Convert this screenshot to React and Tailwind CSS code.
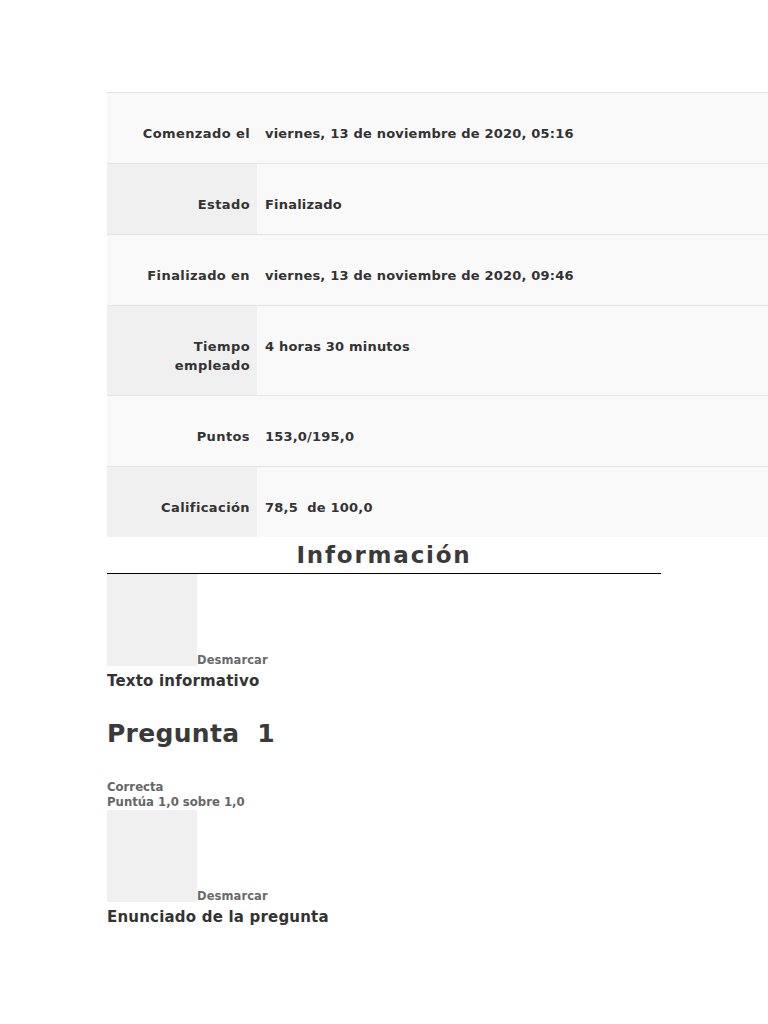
import React from 'react';

// Summary rows of the attempt
const rows = [
  { label: 'Comenzado el', value: 'viernes, 13 de noviembre de 2020, 05:16' },
  { label: 'Estado', value: 'Finalizado' },
  { label: 'Finalizado en', value: 'viernes, 13 de noviembre de 2020, 09:46' },
  { label: ['Tiempo', 'empleado'], value: '4 horas 30 minutos' },
  { label: 'Puntos', value: '153,0/195,0' },
  { label: 'Calificación', value: '78,5\u00a0 de 100,0' },
];

function SummaryTable() {
  return (
    <div className="w-[661px] border-t border-[#e3e3e3]">
      {rows.map((row, i) => (
        <div
          key={i}
          className={
            'grid grid-cols-[150px_1fr] ' + (i > 0 ? 'border-t border-[#e3e3e3]' : '')
          }
        >
          <div
            className={
              'pr-[7px] pt-[31px] pb-[20px] text-right text-[13px] leading-[19px] font-bold tracking-[0.4px] text-[#333] ' +
              (i % 2 === 1 ? 'bg-[#f0f0f0]' : 'bg-[#f9f9f9]')
            }
          >
            {Array.isArray(row.label)
              ? row.label.map((l, j) => <div key={j}>{l}</div>)
              : row.label}
          </div>
          <div className="bg-[#f9f9f9] pl-[8px] pt-[31px] pb-[20px] text-[13px] leading-[19px] font-bold tracking-[0.2px] text-[#333] whitespace-pre">
            {row.value}
          </div>
        </div>
      ))}
    </div>
  );
}

function FlagBox() {
  return (
    <div className="flex items-end">
      <div className="h-[92px] w-[90px] bg-[#f0f0f0]" />
      <span className="text-[11.5px] leading-[12px] font-bold tracking-[0.1px] text-[#6a6a6a]">
        Desmarcar
      </span>
    </div>
  );
}

export default function App() {
  return (
    <div
      className="min-h-screen bg-white pl-[107px] pt-[92px] text-[#333]"
      style={{ fontFamily: '"DejaVu Sans", "Liberation Sans", sans-serif' }}
    >
      <SummaryTable />

      <div className="w-[554px]">
        {/* Information block */}
        <div className="flex h-[37px] items-center justify-center border-b border-black">
          <h2 className="text-[23px] leading-[30px] font-bold tracking-[1.8px] text-[#3a3a3a]">
            Información
          </h2>
        </div>
        <FlagBox />
        <p className="mt-[5px] text-[15px] leading-[20px] font-bold tracking-[0.2px] text-[#333]">
          Texto informativo
        </p>

        {/* Question 1 */}
        <h3 className="mt-[27px] text-[25px] leading-[32px] font-bold tracking-[0.3px] text-[#3a3a3a] whitespace-pre">
          Pregunta  1
        </h3>
        <div className="mt-[30px] text-[11.7px] leading-[15px] font-bold text-[#666]">
          <div>Correcta</div>
          <div>Puntúa 1,0 sobre 1,0</div>
        </div>
        <FlagBox />
        <p className="mt-[5px] text-[15px] leading-[20px] font-bold tracking-[0.2px] text-[#333]">
          Enunciado de la pregunta
        </p>
      </div>
    </div>
  );
}
